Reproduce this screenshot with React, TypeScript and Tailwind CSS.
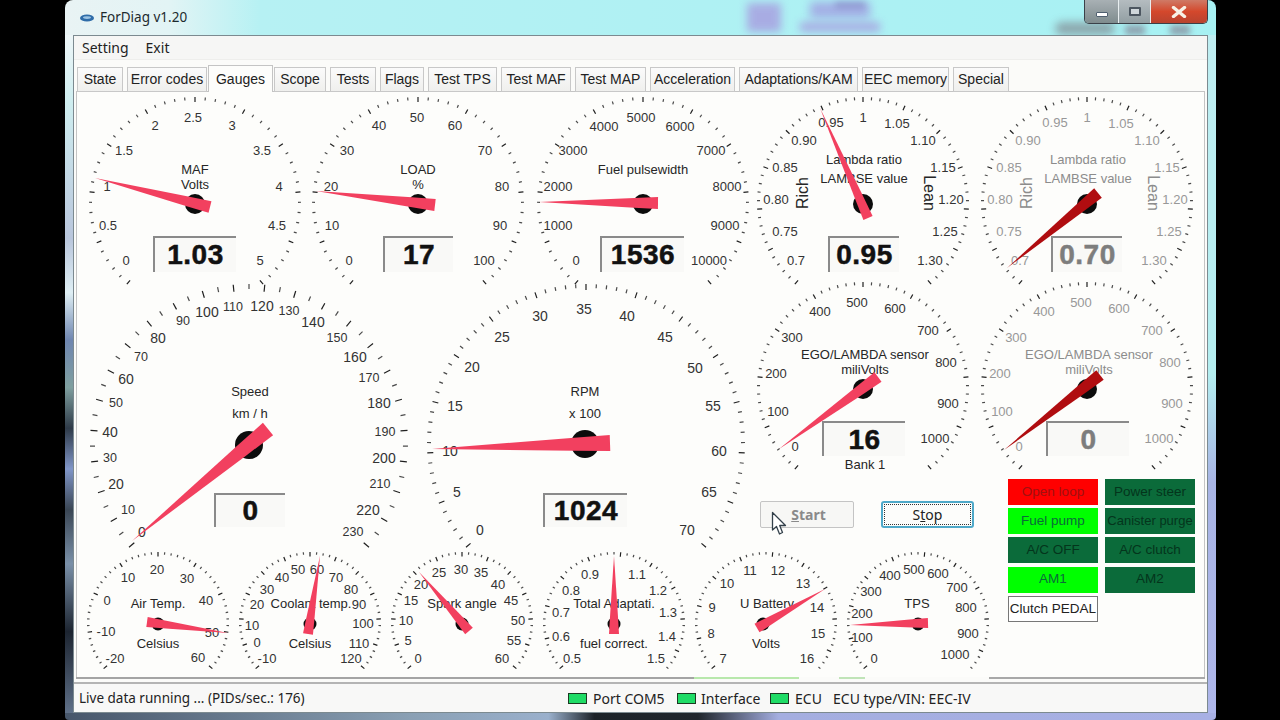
import React from 'react';

type Label = [string, number, number];

interface GaugeDef {
  cx: number;
  cy: number;
  r: number;
  sweep: number;
  ticks: number;
  tickLen: number;
  hub: number;
  hubY?: number;
  hubX?: number;
  tip: [number, number];
  tail: [number, number];
  width: number;
  labels: Label[];
  titles: Label[];
  size?: number;
  oddSize?: number;
  dim?: boolean;
  box?: { x: number; y: number; w: number; h: number; value: string };
  rich?: [number, number];
  lean?: [number, number];
}

// r is the outer end of the ticks
const TOP = { r: 106, sweep: 140, ticks: 50, tickLen: 3, hub: 10, width: 12 };
const SMALL = { r: 71, sweep: 130, ticks: 48, tickLen: 2.5, hub: 6.5, width: 10 };
const BIG = { r: 159, sweep: 131, ticks: 46, tickLen: 5, hub: 14, width: 16 };

const lambdaLabels = (dx: number): Label[] =>
  ([
    ['0.7', 796, 260],
    ['0.75', 785, 231],
    ['0.80', 776, 199],
    ['0.85', 785, 167],
    ['0.90', 804, 140],
    ['0.95', 831, 122],
    ['1', 863, 117],
    ['1.05', 897, 123],
    ['1.10', 923, 140],
    ['1.15', 943, 167],
    ['1.20', 951, 199],
    ['1.25', 945, 231],
    ['1.30', 930, 260],
  ] as Label[]).map(([t, x, y]) => [t, x + dx, y]);

const egoLabels = (dx: number): Label[] =>
  ([
    ['0', 795, 446],
    ['100', 778, 411],
    ['200', 776, 373],
    ['300', 792, 337],
    ['400', 820, 311],
    ['500', 857, 302],
    ['600', 895, 308],
    ['700', 928, 330],
    ['800', 946, 362],
    ['900', 948, 403],
    ['1000', 935, 438],
  ] as Label[]).map(([t, x, y]) => [t, x + dx, y]);

const gauges: GaugeDef[] = [
  {
    ...TOP, cx: 195, cy: 203, tip: [95, 178], tail: [210, 207],
    labels: [['0', 126, 260], ['0.5', 108, 225], ['1', 107, 186], ['1.5', 124, 150], ['2', 155, 125], ['2.5', 193, 117], ['3', 232, 125], ['3.5', 262, 150], ['4', 279, 186], ['4.5', 277, 225], ['5', 260, 260]],
    titles: [['MAF', 195, 169], ['Volts', 195, 184]],
    box: { x: 153, y: 236, w: 83, h: 36, value: '1.03' },
  },
  {
    ...TOP, cx: 418, cy: 203, tip: [316, 191], tail: [435, 205],
    labels: [['0', 349, 260], ['10', 332, 225], ['20', 331, 186], ['30', 347, 150], ['40', 379, 125], ['50', 417, 117], ['60', 455, 125], ['70', 485, 150], ['80', 502, 186], ['90', 500, 225], ['100', 484, 260]],
    titles: [['LOAD', 418, 169], ['%', 418, 184]],
    box: { x: 383, y: 236, w: 70, h: 36, value: '17' },
  },
  {
    ...TOP, cx: 643, cy: 203, tip: [539, 202], tail: [658, 203],
    labels: [['0', 576, 260], ['1000', 558, 225], ['2000', 558, 186], ['3000', 573, 150], ['4000', 604, 126], ['5000', 641, 117], ['6000', 680, 126], ['7000', 711, 150], ['8000', 727, 186], ['9000', 725, 225], ['10000', 709, 260]],
    titles: [['Fuel pulsewidth', 643, 169]],
    box: { x: 600, y: 236, w: 84, h: 36, value: '1536' },
  },
  {
    ...TOP, cx: 863, cy: 203, ticks: 60, tip: [820, 108], tail: [868, 218], width: 10,
    labels: lambdaLabels(0),
    titles: [['Lambda ratio', 864, 159], ['LAMBSE value', 864, 178]],
    box: { x: 828, y: 236, w: 71, h: 36, value: '0.95' },
    rich: [802, 193], lean: [929, 193],
  },
  {
    ...TOP, cx: 1087, cy: 203, ticks: 60, tip: [1007, 268], tail: [1098, 193], width: 12, dim: true,
    labels: lambdaLabels(224),
    titles: [['Lambda ratio', 1088, 159], ['LAMBSE value', 1088, 178]],
    box: { x: 1051, y: 236, w: 71, h: 36, value: '0.70' },
    rich: [1026, 193], lean: [1153, 193],
  },
  {
    ...BIG, cx: 249, cy: 443, hubY: 445, tip: [132, 541], tail: [268, 429], size: 14, oddSize: 12.5,
    labels: [['0', 142, 532], ['10', 128, 510], ['20', 116, 484], ['30', 110, 458], ['40', 110, 432], ['50', 116, 403], ['60', 126, 379], ['70', 141, 357], ['80', 158, 338], ['90', 183, 321], ['100', 207, 312], ['110', 233, 307], ['120', 262, 306], ['130', 289, 311], ['140', 313, 322], ['150', 337, 338], ['160', 355, 357], ['170', 369, 378], ['180', 379, 403], ['190', 385, 432], ['200', 384, 458], ['210', 380, 484], ['220', 368, 510], ['230', 353, 532]],
    titles: [['Speed', 250, 391], ['km / h', 250, 413]],
    box: { x: 214, y: 493, w: 71, h: 34, value: '0' },
  },
  {
    ...BIG, cx: 586, cy: 443, ticks: 70, tickLen: 4, hubX: 585, hubY: 444, tip: [432, 449], tail: [610, 443], width: 16, size: 14,
    labels: [['0', 480, 530], ['5', 457, 492], ['10', 450, 451], ['15', 455, 406], ['20', 472, 367], ['25', 502, 337], ['30', 540, 316], ['35', 584, 309], ['40', 627, 316], ['45', 665, 337], ['50', 695, 368], ['55', 713, 406], ['60', 719, 451], ['65', 709, 492], ['70', 687, 530]],
    titles: [['RPM', 585, 391], ['x 100', 585, 413]],
    box: { x: 543, y: 493, w: 84, h: 34, value: '1024' },
  },
  {
    ...TOP, cx: 863, cy: 388, ticks: 60, tip: [779, 449], tail: [878, 377],
    labels: egoLabels(0),
    titles: [['EGO/LAMBDA sensor', 865, 354], ['miliVolts', 865, 369], ['Bank 1', 865, 464]],
    box: { x: 822, y: 421, w: 83, h: 35, value: '16' },
  },
  {
    ...TOP, cx: 1087, cy: 388, ticks: 60, tip: [1004, 450], tail: [1100, 375], width: 12, dim: true,
    labels: egoLabels(224),
    titles: [['EGO/LAMBDA sensor', 1089, 354], ['miliVolts', 1089, 369]],
    box: { x: 1046, y: 421, w: 83, h: 35, value: '0' },
  },
  {
    ...SMALL, cx: 158, cy: 623, tip: [228, 633], tail: [147, 622],
    labels: [['-20', 115, 658], ['-10', 106, 631], ['0', 107, 600], ['10', 128, 577], ['20', 157, 569], ['30', 187, 578], ['40', 206, 600], ['50', 212, 632], ['60', 198, 657]],
    titles: [['Air Temp.', 158, 603], ['Celsius', 158, 643]],
  },
  {
    ...SMALL, cx: 310, cy: 623, tip: [320, 556], tail: [308, 634],
    labels: [['-10', 267, 658], ['0', 257, 642], ['10', 252, 625], ['20', 257, 604], ['30', 267, 589], ['40', 282, 577], ['50', 298, 569], ['60', 317, 569], ['70', 336, 577], ['80', 351, 589], ['90', 359, 604], ['100', 363, 623], ['110', 359, 643], ['120', 351, 658]],
    titles: [['Coolant temp.', 311, 603], ['Celsius', 310, 643]],
  },
  {
    ...SMALL, cx: 462, cy: 623, tip: [419, 572], tail: [469, 631],
    labels: [['0', 418, 658], ['5', 408, 640], ['10', 406, 620], ['15', 411, 600], ['20', 421, 584], ['25', 439, 572], ['30', 461, 569], ['35', 481, 572], ['40', 498, 584], ['45', 511, 600], ['50', 518, 620], ['55', 514, 640], ['60', 502, 658]],
    titles: [['Spark angle', 462, 603]],
  },
  {
    ...SMALL, cx: 614, cy: 623, tip: [614, 556], tail: [614, 634],
    labels: [['0.5', 572, 658], ['0.6', 561, 636], ['0.7', 561, 612], ['0.8', 571, 590], ['0.9', 590, 574], ['1.1', 637, 574], ['1.2', 658, 590], ['1.3', 668, 612], ['1.4', 667, 636], ['1.5', 656, 658]],
    titles: [['Total Adaptati.', 614, 603], ['fuel correct.', 614, 643]],
  },
  {
    ...SMALL, cx: 766, cy: 623, hubX: 763, tip: [825, 589], tail: [757, 628],
    labels: [['7', 723, 658], ['8', 711, 633], ['9', 712, 607], ['10', 727, 583], ['11', 750, 570], ['12', 778, 570], ['13', 803, 583], ['14', 817, 607], ['15', 818, 633], ['16', 807, 658]],
    titles: [['U Battery', 767, 603], ['Volts', 766, 643]],
  },
  {
    ...SMALL, cx: 918, cy: 623, tip: [850, 625], tail: [928, 623],
    labels: [['0', 874, 658], ['100', 862, 637], ['200', 862, 613], ['300', 871, 591], ['400', 890, 575], ['500', 914, 569], ['600', 938, 573], ['700', 957, 587], ['800', 966, 607], ['900', 968, 633], ['1000', 955, 654]],
    titles: [['TPS', 917, 603]],
  },
];

const PANEL_X = 77;
const PANEL_Y = 92;

// tapered needle with a nearly straight stretch over the hub
function needlePoints(g: GaugeDef) {
  const [tx, ty] = g.tip;
  const [bx, by] = g.tail;
  const len = Math.hypot(bx - tx, by - ty);
  const nx = (-(by - ty) / len) * (g.width / 2);
  const ny = ((bx - tx) / len) * (g.width / 2);
  const mx = tx + (bx - tx) * 0.8;
  const my = ty + (by - ty) * 0.8;
  const k = 0.82;
  return `${tx},${ty} ${mx + nx * k},${my + ny * k} ${bx + nx},${by + ny} ${bx - nx},${by - ny} ${mx - nx * k},${my - ny * k}`;
}

function Gauge({ g }: { g: GaugeDef }) {
  const pad = 8;
  const x0 = g.cx - g.r - pad;
  const y0 = g.cy - g.r - pad;
  const size = (g.r + pad) * 2;
  const textColor = g.dim ? '#8c8c8c' : '#262626';
  const major = Math.max(2, Math.round(g.ticks / (g.labels.length - 1)));
  const ticks = [];
  for (let i = 0; i <= g.ticks; i++) {
    const a = ((-g.sweep + (i * 2 * g.sweep) / g.ticks) * Math.PI) / 180;
    const len = i % major === 0 ? g.tickLen + 2 : g.tickLen;
    ticks.push(
      <line
        key={i}
        x1={g.cx + Math.sin(a) * (g.r - len)}
        y1={g.cy - Math.cos(a) * (g.r - len)}
        x2={g.cx + Math.sin(a) * g.r}
        y2={g.cy - Math.cos(a) * g.r}
        stroke={i % major === 0 ? '#1f1f1f' : '#4a4a4a'}
        strokeWidth={1.2}
      />
    );
  }
  return (
    <>
      {g.box && (
        <div
          className={`absolute flex items-center justify-center border-t-2 border-l-2 border-[#8a8a8a] bg-[#f9f9f7] text-[28px] font-bold tracking-[0.5px] [-webkit-text-stroke:0.5px] font-['Liberation_Sans',sans-serif] ${g.dim ? 'text-[#7d7d7d]' : 'text-[#111111]'}`}
          style={{ left: g.box.x - PANEL_X, top: g.box.y - PANEL_Y, width: g.box.w, height: g.box.h }}
        >
          {g.box.value}
        </div>
      )}
      <svg
        className="absolute overflow-visible font-['Liberation_Sans',sans-serif]"
        style={{ left: x0 - PANEL_X, top: y0 - PANEL_Y, width: size, height: size }}
        viewBox={`${x0} ${y0} ${size} ${size}`}
      >
        {ticks}
        {g.labels.map(([t, x, y], i) => (
          <text
            key={t}
            x={x}
            y={y}
            textAnchor="middle"
            dominantBaseline="central"
            fontSize={g.oddSize && i % 2 === 1 ? g.oddSize : g.size ?? 13}
            fill={g.dim ? '#989898' : '#333333'}
          >
            {t}
          </text>
        ))}
        {g.titles.map(([t, x, y]) => (
          <text key={t} x={x} y={y} textAnchor="middle" dominantBaseline="central" fontSize={13} fill={textColor}>
            {t}
          </text>
        ))}
        {g.rich && (
          <text
            transform={`translate(${g.rich[0]} ${g.rich[1]}) rotate(-90)`}
            textAnchor="middle"
            dominantBaseline="central"
            fontSize={16}
            fill={textColor}
          >
            Rich
          </text>
        )}
        {g.lean && (
          <text
            transform={`translate(${g.lean[0]} ${g.lean[1]}) rotate(90)`}
            textAnchor="middle"
            dominantBaseline="central"
            fontSize={16}
            fill={textColor}
          >
            Lean
          </text>
        )}
        <circle cx={g.hubX ?? g.cx} cy={g.hubY ?? g.cy + 1} r={g.hub} fill="#0c0c0c" />
        <polygon points={needlePoints(g)} fill={g.dim ? '#b00d10' : '#f2405f'} />
      </svg>
    </>
  );
}

const tabs = [
  { label: 'State', cls: 'w-[46px]' },
  { label: 'Error codes', cls: 'w-[80px]' },
  { label: 'Gauges', cls: 'w-[65px]', active: true },
  { label: 'Scope', cls: 'w-[52px]' },
  { label: 'Tests', cls: 'w-[46px]' },
  { label: 'Flags', cls: 'w-[44px]' },
  { label: 'Test TPS', cls: 'w-[69px]' },
  { label: 'Test MAF', cls: 'w-[70px]' },
  { label: 'Test MAP', cls: 'w-[71px]' },
  { label: 'Acceleration', cls: 'w-[85px]' },
  { label: 'Adaptations/KAM', cls: 'w-[119px]' },
  { label: 'EEC memory', cls: 'w-[87px]' },
  { label: 'Special', cls: 'w-[56px]' },
];

const flags = [
  { label: 'Open loop', cls: 'bg-[#ff0000] text-[#a01010] text-[13.5px]' },
  { label: 'Power steer', cls: 'bg-[#0b6b3a] text-[#04351c] text-[13.5px]' },
  { label: 'Fuel pump', cls: 'bg-[#00ff00] text-[#0b6b3a] text-[13.5px]' },
  { label: 'Canister purge', cls: 'bg-[#0b6b3a] text-[#04351c] text-[13px]' },
  { label: 'A/C OFF', cls: 'bg-[#0b6b3a] text-[#04351c] text-[13.5px]' },
  { label: 'A/C clutch', cls: 'bg-[#0b6b3a] text-[#04351c] text-[13.5px]' },
  { label: 'AM1', cls: 'bg-[#00ff00] text-[#0b6b3a] text-[13.5px]' },
  { label: 'AM2', cls: 'bg-[#0b6b3a] text-[#04351c] text-[13.5px]' },
  { label: 'Clutch PEDAL', cls: 'bg-white text-[#222222] border border-[#777777] text-[13.5px]' },
];

function Led() {
  return <span className="h-[11px] w-[19px] border border-[#1c3a22] bg-[#1fdc66] shrink-0" />;
}

export default function App() {
  return (
    <div className="relative flex h-[720px] w-[1280px] overflow-hidden bg-black pl-[65px] font-['Noto_Sans',sans-serif] text-[#222222]">
      <div className="flex h-full w-[1151px] flex-col rounded-t-lg">
        {/* Title bar */}
        <div className="relative flex h-[35px] shrink-0 items-center overflow-hidden rounded-t-lg bg-[linear-gradient(to_right,#e9f3f4_0%,#e2f4f5_9%,#b6f1f3_17%,#a7f1f3_100%)] pl-[15px]">
          {/* blurred desktop behind the glass */}
          <div className="absolute left-[682px] top-[3px] h-[29px] w-[34px] bg-[#a79ce0] opacity-80 blur-[4px]" />
          <div className="absolute left-[745px] top-[2px] h-[16px] w-[60px] bg-[#9f92e0] opacity-70 blur-[5px]" />
          <div className="absolute left-[735px] top-[22px] h-[10px] w-[80px] bg-[#a79ce0] opacity-80 blur-[4px]" />
          <div className="absolute left-[770px] top-[2px] h-[6px] w-[30px] bg-[#8080c0] opacity-60 blur-[3px]" />
          <div className="absolute left-[990px] top-[22px] h-[13px] w-[60px] rounded-full bg-[#808890] opacity-70 blur-[4px]" />
          <div className="absolute left-[1060px] top-[25px] h-[10px] w-[20px] bg-[#8890a0] opacity-80 blur-[3px]" />
          <div className="absolute left-[1105px] top-[25px] h-[10px] w-[20px] bg-[#8890a0] opacity-80 blur-[3px]" />
          <svg className="relative h-[8px] w-[14px]" viewBox="0 0 14 8">
            <ellipse cx="7" cy="4" rx="7" ry="3.6" fill="#2f6ca8" />
            <ellipse cx="7" cy="3.6" rx="4" ry="1.4" fill="#9cc4e4" />
          </svg>
          <span className="relative ml-[6px] text-[13.5px] text-[#1d2a2e]">ForDiag v1.20</span>
          <div className="relative ml-auto mr-[8px] flex h-[24px] self-start overflow-hidden rounded-b-[5px] border border-t-0 border-[#3a4048]">
            <div className="flex w-[34px] items-end justify-center bg-[linear-gradient(to_bottom,#a8b0b4,#7f8c8e)] pb-[6px] border-r border-[#e8eef0]">
              <span className="h-[5px] w-[12px] rounded-[1px] border border-[#506070] bg-white" />
            </div>
            <div className="flex w-[32px] items-center justify-center bg-[linear-gradient(to_bottom,#b4bcc0,#929ea2)] border-r border-[#e8eef0]">
              <span className="h-[9px] w-[12px] rounded-[1px] border-2 border-[#4c5660] bg-[#cfd6da]" />
            </div>
            <div className="flex w-[56px] items-center justify-center bg-[linear-gradient(to_bottom,#cf7a66,#d4482c_50%,#b8432f)]">
              <svg className="h-[12px] w-[16px]" viewBox="0 0 16 12">
                <path d="M2.5 1.5 L13.5 10.5 M13.5 1.5 L2.5 10.5" stroke="#f7f1e6" strokeWidth="3.4" strokeLinecap="round" />
              </svg>
            </div>
          </div>
        </div>

        <div className="flex min-h-0 flex-1">
          <div className="w-[8px] shrink-0 bg-[linear-gradient(to_bottom,#eef6f8_0%,#cfeef0_10%,#b9c6dc_30%,#dfeff4_38%,#6f86b0_45%,#7f9f9f_52%,#2e3a48_58%,#8096c8_64%,#3a4654_70%,#7a90a8_78%,#1c2430_88%,#5f7088_100%)]" />

          {/* Client area */}
          <div className="flex min-w-0 flex-1 flex-col border border-[#7c8a90] bg-[#fbfbf9]">
            <div className="flex h-[24px] shrink-0 items-center gap-[17px] border-b border-[#eeeeec] bg-[#f6f6f5] pl-[8px] text-[14px]">
              <span>Setting</span>
              <span>Exit</span>
            </div>

            {/* Tabs */}
            <div className="z-10 -mb-px flex h-[32px] shrink-0 items-end gap-[4px] pl-[3px] font-['Liberation_Sans',sans-serif] text-[14px]">
              {tabs.map((t) => (
                <div
                  key={t.label}
                  className={
                    t.active
                      ? `${t.cls} -mx-[3px] flex h-[27px] items-start justify-center border border-b-0 border-[#c4c4c4] bg-[#fdfdfb] pt-[3px]`
                      : `${t.cls} flex h-[25px] items-center justify-center border border-[#c8c8c8] bg-[linear-gradient(to_bottom,#fbfbfb,#efefed)]`
                  }
                >
                  {t.label}
                </div>
              ))}
            </div>

            {/* Gauge panel */}
            <div className="relative mx-[2px] min-h-0 flex-1 border-x border-t border-[#c4c4c4] bg-[#fdfdfb]">
              {gauges.map((g, i) => (
                <Gauge key={i} g={g} />
              ))}
              <div className="ml-[683px] mt-[387px] flex items-start">
                <div className="mt-[22px] flex w-[248px] gap-[27px]">
                  <button className="h-[27px] w-[94px] rounded-[2px] border border-[#c4c4c4] bg-[#f7f7f5] pl-[3px] text-[14px] font-bold text-[#8a8a8a]">
                    <u>S</u>tart
                  </button>
                  <button className="h-[27px] w-[93px] rounded-[3px] border-2 border-[#4fa9c9] bg-[#fdfdfb] p-px text-[14px]">
                    <span className="flex h-full w-full items-center justify-center border border-dotted border-[#333333]">
                      S<u>t</u>op
                    </span>
                  </button>
                </div>
                <div className="grid grid-cols-[90px_90px] gap-x-[7px] gap-y-[3.2px] font-['Liberation_Sans',sans-serif]">
                  {flags.map((f) => (
                    <div key={f.label} className={`flex h-[26px] items-center justify-center whitespace-nowrap ${f.cls}`}>
                      {f.label}
                    </div>
                  ))}
                </div>
              </div>
              {/* mouse pointer */}
              <svg className="absolute left-[694px] top-[419px] h-[26px] w-[18px]" viewBox="0 0 18 26">
                <path d="M1.5 1.5 L1.5 19 L5.5 15.5 L8.5 23 L11.5 21.5 L8.7 14.5 L14.5 14.5 Z" fill="#ffffff" stroke="#33404a" strokeWidth="1.3" strokeLinejoin="round" />
              </svg>
            </div>

            {/* Panel bottom edge */}
            <div className="mx-[2px] flex h-[2px] shrink-0">
              <div className="w-[618px] bg-[#a4a4a4]" />
              <div className="w-[105px] bg-[#b8e8ac]" />
              <div className="w-[40px]" />
              <div className="w-[26px] bg-[#c0e4b8]" />
              <div className="w-[124px]" />
              <div className="flex-1 bg-[#a8a8a8]" />
            </div>
            <div className="h-[3px] shrink-0" />

            {/* Status bar */}
            <div className="flex h-[30px] shrink-0 items-center border-t-2 border-[#b4b4b4] bg-[#f8f8f7] pl-[5px] text-[14px]">
              <span className="w-[489px] pt-px text-[13.5px]">Live data running ... (PIDs/sec.: 176)</span>
              <Led />
              <span className="ml-[6px] w-[84px]">Port COM5</span>
              <Led />
              <span className="ml-[5px] w-[69px]">Interface</span>
              <Led />
              <span className="ml-[6px] w-[38px]">ECU</span>
              <span>ECU type/VIN: EEC-IV</span>
            </div>
          </div>

          <div className="w-[8px] shrink-0 bg-[linear-gradient(to_bottom,#bfeef2_0%,#b4eef0_50%,#a8b4e4_66%,#aeb6ea_100%)]" />
        </div>

        <div className="h-[7px] shrink-0 rounded-b-sm bg-[linear-gradient(to_right,#47566a_0%,#8aa0b4_30%,#9ab0cc_42%,#1c2228_46%,#20262c_55%,#a4aee0_62%,#a8b0e4_100%)]" />
      </div>
    </div>
  );
}
